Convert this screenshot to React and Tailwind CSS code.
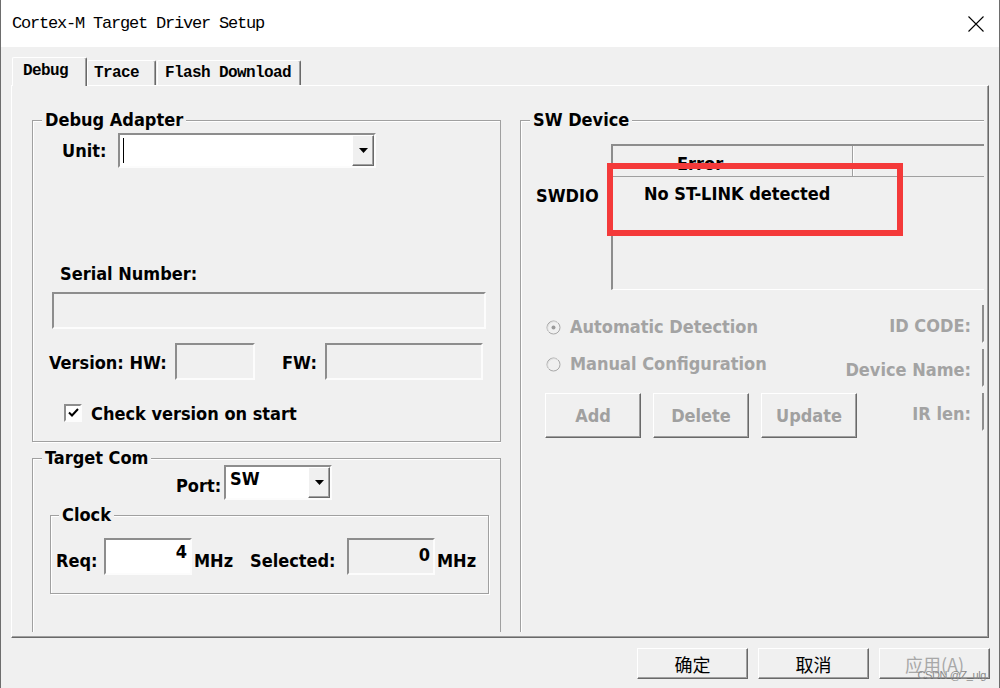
import React from "react";

const ui = "font-['DejaVu_Sans_Condensed','DejaVu_Sans',sans-serif] font-bold text-[18px] leading-[22px] text-black";
const sunken = "border-2 border-t-[#8d8d8d] border-l-[#8d8d8d] border-r-[#fcfcfc] border-b-[#fcfcfc]";
const raised = "border border-t-white border-l-white border-r-[#696969] border-b-[#696969] shadow-[inset_-1px_-1px_0_#a0a0a0]";
const group = "min-w-0 border border-[#a0a0a0] shadow-[inset_1px_1px_0_#fff,1px_1px_0_#fff]";
const legendCls = "ml-[9px] px-[3px] bg-[#f0f0f0]";
const tab = "border-t border-l border-r border-t-white border-l-white border-r-[#696969] shadow-[inset_-1px_0_0_#a0a0a0] rounded-t-[2px] bg-[#f0f0f0] font-['Liberation_Mono',monospace] font-bold text-[16px] leading-[20px] tracking-[-0.6px]";

const DropBtn = () => (
  <div className={"w-[22px] h-full bg-[#f0f0f0] flex items-center justify-center " + raised}>
    <svg width="9" height="5" viewBox="0 0 9 5">
      <path d="M0 0H9L4.5 5Z" fill="#000" />
    </svg>
  </div>
);

const Checkbox = () => (
  <div className={"w-[18px] h-[18px] bg-white flex items-center justify-center " + sunken}>
    <svg width="11" height="10" viewBox="0 0 11 10">
      <path d="M1 4.5L4 7.5L10 1" stroke="#000" strokeWidth="2" fill="none" />
    </svg>
  </div>
);

const Radio = ({ on }) => (
  <svg width="15" height="15" viewBox="0 0 15 15">
    <circle cx="7.5" cy="7.5" r="6.5" fill="#f0f0f0" stroke="#a8a8a8" />
    <path d="M2.9 12A6.5 6.5 0 0 1 12 2.9" stroke="#d8d8d8" fill="none" />
    {on && <circle cx="7.5" cy="7.5" r="2" fill="#9a9a9a" />}
  </svg>
);

const DisabledBtn = ({ label }) => (
  <div className={"w-[96px] h-[45px] shrink-0 bg-[#f0f0f0] flex items-center justify-center text-[#a0a0a0] " + raised}>
    {label}
  </div>
);

const DialogBtn = ({ label, disabled }) => (
  <div
    className={
      "w-[111px] h-[31px] bg-[#f0f0f0] flex items-center justify-center font-['Noto_Sans_CJK_SC',sans-serif] font-normal text-[18px] leading-[22px] " +
      (disabled ? "text-[#a8a8a8] " : "text-black ") +
      raised
    }
  >
    {label}
  </div>
);

export default function App() {
  return (
    <div className={"relative w-[1000px] h-[688px] bg-[#f0f0f0] border-l border-r border-[#6d6d6d] overflow-hidden flex flex-col " + ui}>
      {/* title bar */}
      <div className="h-[47px] bg-white flex items-center justify-between pl-[11px] pr-[15px] shrink-0">
        <span className="font-['Liberation_Mono',monospace] font-normal text-[17px] tracking-[-1.2px] leading-[22px]">
          Cortex-M Target Driver Setup
        </span>
        <svg width="16" height="16" viewBox="0 0 16 16">
          <path d="M0.5 0.5L15.5 15.5M15.5 0.5L0.5 15.5" stroke="#000" strokeWidth="1.1" />
        </svg>
      </div>

      {/* tabs */}
      <div className="relative z-10 mt-[10px] h-[29px] pl-[11px] flex items-end shrink-0">
        <div className={"w-[75px] h-[29px] pl-[10px] pt-[3px] " + tab}>Debug</div>
        <div className={"w-[69px] h-[25px] mb-[1px] pl-[6px] pt-[2px] " + tab}>Trace</div>
        <div className={"ml-[1px] w-[144px] h-[25px] mb-[1px] pl-[7px] pt-[2px] " + tab}>Flash Download</div>
      </div>

      {/* tab page */}
      <div className="-mt-[1px] ml-[10px] w-[978px] h-[553px] shrink-0 border border-t-white border-l-white border-r-[#696969] border-b-[#696969] shadow-[inset_-1px_-1px_0_#a0a0a0] pt-[23px] pb-[5px] pl-[20px] flex gap-[19px] overflow-hidden">
        {/* left column */}
        <div className="w-[469px] h-full overflow-hidden shrink-0 flex flex-col">
          <fieldset className={"h-[333px] shrink-0 " + group}>
            <legend className={legendCls}>Debug Adapter</legend>
            <div className="mt-[2px] h-[35px] flex items-center">
              <span className="w-[85px] pl-[29px]">Unit:</span>
              <div className={"w-[258px] h-[35px] bg-white flex " + sunken}>
                <div className="flex-1 flex items-center pl-[3px]">
                  <div className="w-[1px] h-[25px] bg-black" />
                </div>
                <DropBtn />
              </div>
            </div>
            <div className="mt-[95px] h-[22px] pl-[27px]">Serial Number:</div>
            <div className={"mt-[7px] ml-[19px] w-[434px] h-[37px] " + sunken} />
            <div className="mt-[14px] h-[37px] flex items-center">
              <span className="w-[142px] pl-[16px] pt-[3px] whitespace-nowrap">Version: HW:</span>
              <div className={"w-[80px] h-[37px] " + sunken} />
              <span className="w-[70px] pl-[27px] pt-[3px]">FW:</span>
              <div className={"w-[158px] h-[37px] " + sunken} />
            </div>
            <div className="mt-[23px] h-[20px] pl-[31px] flex items-center gap-[9px]">
              <Checkbox />
              <span className="pt-[2px]">Check version on start</span>
            </div>
          </fieldset>

          <fieldset className={"mt-[5px] h-[600px] shrink-0 " + group}>
            <legend className={legendCls}>Target Com</legend>
            <div className="-mt-[4px] h-[35px] flex items-center">
              <span className="w-[191px] pl-[143px] pt-[6px]">Port:</span>
              <div className={"w-[108px] h-[35px] bg-white flex " + sunken}>
                <div className="flex-1 pl-[4px] pt-[1px]">SW</div>
                <DropBtn />
              </div>
            </div>
            <fieldset className={"mt-[4px] ml-[17px] w-[439px] h-[90px] " + group}>
              <legend className="ml-[8px] px-[3px] bg-[#f0f0f0]">Clock</legend>
              <div className="mt-[12px] h-[37px] flex items-end">
                <span className="w-[53px] pl-[5px] pb-[3px]">Req:</span>
                <div className={"w-[88px] h-[37px] bg-white text-right pr-[3px] pt-[1px] " + sunken}>4</div>
                <span className="w-[58px] pl-[2px] pb-[3px]">MHz</span>
                <span className="w-[97px] pb-[3px]">Selected:</span>
                <div className={"w-[88px] h-[37px] text-right pr-[3px] pt-[4px] " + sunken}>0</div>
                <span className="pl-[2px] pb-[3px]">MHz</span>
              </div>
            </fieldset>
          </fieldset>
        </div>

        {/* right column */}
        <div className="w-[464px] h-full overflow-hidden shrink-0">
          <fieldset className={"w-[520px] h-[600px] " + group}>
            <legend className={legendCls}>SW Device</legend>
            <div className="mt-[13px] flex">
              <div className="w-[90px] pl-[15px] pt-[41px] shrink-0">SWDIO</div>
              <div className="relative w-[400px] h-[146px] shrink-0 border-t-2 border-l-2 border-b border-t-[#8d8d8d] border-l-[#8d8d8d] border-b-white">
                <div className="h-[31px] flex border-b border-[#a0a0a0]">
                  <div className="w-[240px] h-full border-r border-[#a0a0a0] shadow-[1px_0_0_#fff] pl-[64px] pt-[7px]">Error</div>
                </div>
                <div className="pl-[31px] pt-[6px]">No ST-LINK detected</div>
                <div className="absolute left-[-6px] top-[17px] w-[296px] h-[73px] border-[6px] border-[#f43a3a]" />
              </div>
            </div>

            <div className="mt-[15px] flex">
              <div className="w-[324px] pl-[24px] shrink-0 text-[#a3a3a3]">
                <div className="mt-[11px] h-[22px] flex items-center">
                  <span className="w-[25px] pl-[1px]"><Radio on /></span>
                  <span>Automatic Detection</span>
                </div>
                <div className="mt-[15px] h-[22px] flex items-center">
                  <span className="w-[25px] pl-[1px]"><Radio /></span>
                  <span>Manual Configuration</span>
                </div>
                <div className="mt-[18px] flex gap-[12px]">
                  <DisabledBtn label="Add" />
                  <DisabledBtn label="Delete" />
                  <DisabledBtn label="Update" />
                </div>
              </div>
              <div className="flex flex-col gap-[6px] text-[#a3a3a3]">
                {["ID CODE:", "Device Name:", "IR len:"].map((l) => (
                  <div key={l} className="h-[38px] flex items-center gap-[11px]">
                    <span className="w-[126px] text-right whitespace-nowrap pt-[4px]">{l}</span>
                    <div className={"w-[40px] h-[38px] " + sunken} />
                  </div>
                ))}
              </div>
            </div>
          </fieldset>
        </div>
      </div>

      {/* dialog buttons */}
      <div className="mt-[10px] pr-[9px] flex justify-end gap-[10px]">
        <DialogBtn label="确定" />
        <DialogBtn label="取消" />
        <DialogBtn label="应用(A)" disabled />
      </div>

      <div className="absolute right-[13px] bottom-[7px] font-['Liberation_Sans',sans-serif] font-normal text-[11px] leading-[12px] tracking-[-0.4px] text-[#8a8a8a]">
        CSDN @Z_ulg
      </div>
    </div>
  );
}
